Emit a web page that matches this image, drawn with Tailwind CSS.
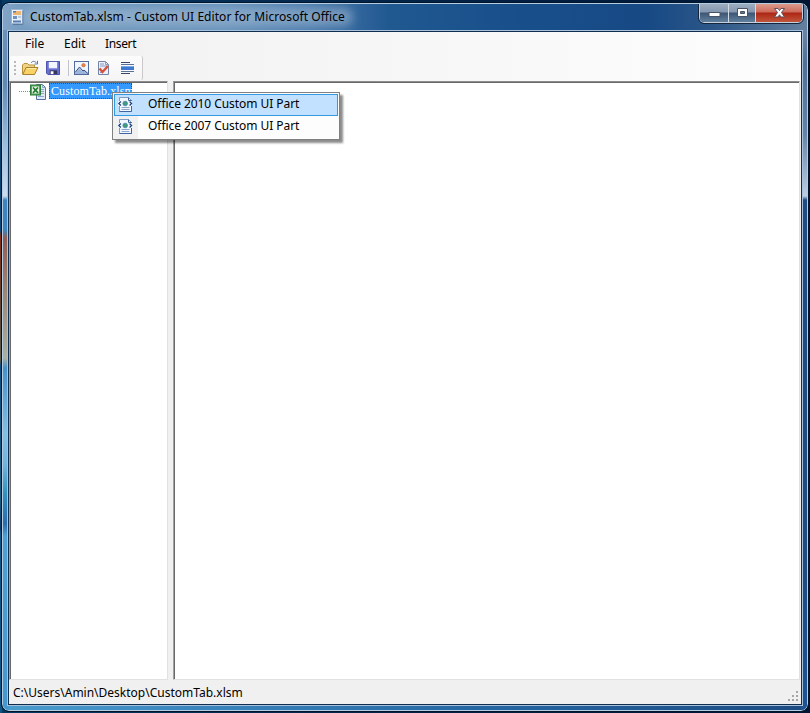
<!DOCTYPE html>
<html lang="en">
<head>
  <meta charset="UTF-8">
  <meta name="viewport" content="width=device-width, initial-scale=1.0">
  <title>CustomTab.xlsm - Custom UI Editor for Microsoft Office</title>
  <script src="https://cdn.jsdelivr.net/npm/@tailwindcss/browser@4"></script>
</head>
<body class="w-[810px] h-[713px] overflow-hidden bg-[linear-gradient(90deg,#063a64_0%,#032347_50%,#001533_100%)] pl-[2px] pt-[3px] font-['Noto_Sans',sans-serif] text-xs text-black whitespace-nowrap">
  <!-- Desktop showing at the left edge -->
  <div class="absolute left-0 top-0 w-[2px] h-[713px] bg-[linear-gradient(180deg,#062c50_0px,#0b4a78_230px,#7e2c18_236px,#5d4833_320px,#5d5a47_360px,#0b4f80_366px,#175d7e_500px,#073965_528px,#0c5585_533px,#0c5585_713px)]"></div>

  <!-- Window frame -->
  <div class="relative w-[806px] h-[708px] rounded-[7px] border border-[#b4cde3] outline outline-1 outline-[#02162b] bg-[linear-gradient(90deg,#4a9dcd_0%,#3d88c0_20%,#2566a2_60%,#1d4b82_100%)] px-[4px] flex flex-col overflow-hidden">
    <!-- Glass colours of the frame sides -->
    <div class="absolute left-0 top-0 w-[6px] h-[706px] bg-[linear-gradient(180deg,#7195bb_0px,#6189b3_80px,#9bbdde_140px,#cadcf0_192px,#3c85bd_196px,#3c85bd_226px,#935c54_234px,#9b8070_280px,#aab0a1_354px,#4592c8_364px,#83bfe3_430px,#71b4dc_460px,#3192bd_490px,#2b6dad_520px,#4da0d1_532px,#4498cd_706px)]"></div>
    <div class="absolute right-0 top-0 w-[6px] h-[706px] bg-[linear-gradient(180deg,#7f96b2_0px,#526f95_60px,#6684a8_130px,#bdcde2_192px,#1f4c82_196px,#1d4b82_560px,#1d5595_706px)]"></div>
    <div class="absolute left-0 top-0 w-full h-[26px] bg-[linear-gradient(90deg,#83a4c6_0%,#719abf_3%,#6692bb_28%,#4b7bad_38%,#205890_48%,#184f8b_65%,#174984_80%,#2b5688_88%,#64809f_100%)]"></div>

    <!-- Title bar -->
    <div class="relative flex h-[26px] shrink-0">
      <svg class="mt-[5px] ml-[4px] w-[13px] h-[16px]" viewBox="0 0 13 16">
        <rect x=".5" y=".5" width="11" height="14" fill="#edf3fb" stroke="#9db3cf"/>
        <rect x="2" y="2" width="8" height="4" fill="#f2b56b"/>
        <rect x="2" y="2" width="3" height="1.500" fill="#567eae"/>
        <rect x="2" y="7" width="4" height="3" fill="#6a91c7"/>
        <rect x="7" y="7" width="3" height="2" fill="#b8cbe2"/>
        <path d="M2 12.500H10" stroke="#4e78b4" stroke-width="2"/>
        <path d="M12 2V15.500H2" stroke="#5877a0" fill="none"/>
      </svg>
      <div class="relative ml-[6px] mt-[4px] h-[18px] leading-[18px]">
        <div class="absolute -left-2 -right-2 top-0 h-[18px] rounded-full bg-[#a7bdd3]/55 blur-[5px]"></div>
        <span class="relative tracking-[0.06px]">CustomTab.xlsm - Custom UI Editor for Microsoft Office</span>
      </div>
      <div class="absolute right-0 top-[-1px] flex h-[20px] w-[104px] rounded-b-[5px] border border-t-0 border-[#c3d1df] outline outline-1 outline-[#15253c] overflow-hidden">
        <div class="w-[29px] border-r border-[#d3dce6] bg-[linear-gradient(180deg,#a1b1c4_0%,#8497ae_48%,#3d5575_52%,#62809e_100%)] flex justify-center">
          <svg width="13" height="7" class="mt-[8px]" viewBox="0 0 13 7"><rect x="1" y="1.500" width="11" height="4" fill="#fff" stroke="#4a5365"/></svg>
        </div>
        <div class="w-[27px] border-r border-[#d3dce6] bg-[linear-gradient(180deg,#a1b1c4_0%,#8497ae_48%,#3d5575_52%,#62809e_100%)] flex justify-center">
          <svg width="13" height="11" class="mt-[4px]" viewBox="0 0 13 11"><path fill-rule="evenodd" d="M1.500 1.500H11.500V9.500H1.500ZM4.500 4.500V6.500H8.500V4.500Z" fill="#fff" stroke="#4a5365"/></svg>
        </div>
        <div class="flex-1 bg-[linear-gradient(180deg,#dda092_0%,#cd6a5a_48%,#ac2512_52%,#c1553b_100%)] flex justify-center">
          <svg width="13" height="12" class="mt-[4px]" viewBox="0 0 13 12"><path d="M1.500 1.500H5L6.500 3.500 8 1.500H11.500L8.500 5.500 11.500 10H8L6.500 7.800 5 10H1.500L4.500 5.500Z" fill="#fff" stroke="#5d4e59"/></svg>
        </div>
      </div>
    </div>

    <!-- Client area -->
    <div class="relative w-[796px] h-[676px] shrink-0 border border-[#a8c0da] bg-[#102e50] p-px">
      <div class="flex flex-col w-[792px] h-[672px] bg-[#f0f0f0]">
        <div class="flex h-[24px] bg-[linear-gradient(90deg,#f0f0f0,#fdfdfd)] pl-[16px] leading-[24px]">
          <span class="w-[39px]">File</span>
          <span class="w-[41px]">Edit</span>
          <span class="tracking-[-0.35px]">Insert</span>
        </div>
        <div class="flex h-[26px] bg-[linear-gradient(90deg,#f0f0f0,#fdfdfd)]">
          <div class="flex items-center w-[133px] h-[24px] ml-[1px] rounded-[2px] border-r border-[#c9c9c9] bg-[linear-gradient(180deg,#fcfcfc,#f5f5f5)]">
            <svg class="ml-[4px] w-[3px] h-[15px]" viewBox="0 0 3 15"><path d="M1 0V15" stroke="#b9b9b9" stroke-width="2" stroke-dasharray="2 2"/></svg>
            <!-- Open -->
            <svg class="ml-[5px] w-[17px] h-[16px] -mt-px" viewBox="0 0 17 16">
              <path d="M.5 14V5L2 3.500H5.500L7 5H12.500V7.500" fill="#f0d283" stroke="#b8933c"/>
              <path d="M.8 14.500 4 7.500H16L12.500 14.500Z" fill="#f8d264" stroke="#a98030"/>
              <path d="M5 8.600H14" stroke="#fff0b0"/>
              <path d="M9 3C10.500.7 13 .8 14.500 3M15.500 .8V4H12.500" fill="none" stroke="#5f789c"/>
            </svg>
            <!-- Save -->
            <svg class="ml-[7px] w-[14px] h-[14px]" viewBox="0 0 15 15">
              <path d="M.5.5H14.500V14.500H2L.5 13Z" fill="#6a70d2" stroke="#4247a4"/>
              <rect x="3" y="1" width="9" height="7" fill="#f4f6ff"/>
              <path d="M3 8H12" stroke="#8d94de"/>
              <rect x="4" y="10" width="8" height="4" fill="#34375d"/>
              <rect x="5" y="11" width="3" height="3" fill="#fff"/>
            </svg>
            <div class="ml-[8px] w-px h-[16px] bg-[#c3c3c8]"></div>
            <!-- Insert icon -->
            <svg class="ml-[5px] w-[15px] h-[14px]" viewBox="0 0 15 14">
              <rect x=".5" y=".5" width="14" height="13" fill="#eff6ff" stroke="#526b9b"/>
              <path d="M1 12 5.500 7 8 10 9.500 9 14 12.500V13H1Z" fill="#9db5da"/>
              <path d="M1 11.500 5.500 6 9 10 10 9 14 12.500" fill="none" stroke="#344c7c"/>
              <circle cx="9.500" cy="4.200" r="1.700" fill="#ef873d" stroke="#b96238" stroke-width=".6"/>
            </svg>
            <!-- Validate -->
            <svg class="ml-[9px] w-[12px] h-[14px]" viewBox="0 0 12 14">
              <path d="M.5.5H7.500L10.500 3.500V13.500H.5Z" fill="#eaf0fb" stroke="#7384a8"/>
              <path d="M7.500.5V3.500H10.500M2 3H6M2 5H9M2 11.500H4" fill="none" stroke="#8a9bbf"/>
              <path d="M1.500 7.500 4.500 11 10 5" fill="none" stroke="#d6513a" stroke-width="2.400"/>
            </svg>
            <!-- Generate callbacks -->
            <svg class="ml-[11px] w-[13px] h-[12px]" viewBox="0 0 13 12">
              <path d="M0 .5H9M0 11.500H9" stroke="#34486e"/>
              <path d="M0 2.500H13M0 9.500H13" stroke="#5c6f94"/>
              <rect y="4" width="13" height="4" fill="#3e79cf"/>
              <path d="M0 4.500H13" stroke="#79aae5"/>
            </svg>
          </div>
        </div>

        <!-- Part tree and editor -->
        <div class="flex h-[600px]">
          <div class="w-[160px] h-[600px]">
            <div class="w-[159px] h-[599px] -mt-px border border-t-[#8c8c8c] border-l-[#a0a0a0] border-r-[#e1e1e1] border-b-[#e1e1e1] bg-white shadow-[inset_1px_1px_0_#696969] flex pt-px">
              <div class="w-[11px] mt-[8px] ml-[9px] h-px border-t border-dotted border-[#8a8a8a]"></div>
              <svg class="w-[16px] h-[16px] mt-px" viewBox="0 0 16 16">
                <path d="M6.500 .5H12.500L15.500 3.500V15.500H6.500Z" fill="#dfe9f8" stroke="#57719b"/>
                <path d="M12.500.5V3.500H15.500M8 12.500H14M11 5.500H14M11 7.500H14M11 9.500H14" fill="none" stroke="#8ea5c8"/>
                <rect x=".5" y="1" width="10" height="10" fill="#4fa455" stroke="#2f7d3b"/>
                <rect x="2" y="2.500" width="7" height="7" fill="#e9f5e6"/>
                <path d="M3 3.500 8 8.800M8 3.500 3 8.800" stroke="#237a31" stroke-width="1.700"/>
              </svg>
              <div class="ml-[3px] h-[16px] w-[83px] border border-dotted border-[#6b4b16] bg-[#3399ff] pl-px text-white font-['Liberation_Serif',serif] text-[12px] leading-[14px] tracking-[0.1px]">CustomTab.xlsm</div>
            </div>
          </div>
          <div class="ml-[4px] w-[628px] h-[600px] pr-px">
            <div class="w-[627px] h-[599px] -mt-px border border-t-[#8c8c8c] border-l-[#a0a0a0] border-r-[#e1e1e1] border-b-[#e1e1e1] bg-white shadow-[inset_1px_1px_0_#696969]"></div>
          </div>
        </div>

        <!-- Status bar -->
        <div class="flex justify-between h-[22px] pl-[4px] leading-[22px]">
          <span id="status">C:\Users\Amin\Desktop\CustomTab.xlsm</span>
          <svg class="mt-[9px] mr-[2px] w-[11px] h-[11px]" viewBox="0 0 11 11" fill="#a6a6a6">
            <path d="M8 0H10V2H8ZM4 4H6V6H4ZM8 4H10V6H8ZM0 8H2V10H0ZM4 8H6V10H4ZM8 8H10V10H8Z"/>
          </svg>
        </div>
      </div>
    </div>
  </div>

  <!-- Context menu -->
  <div class="absolute left-[112px] top-[92px] w-[228px] h-[48px] border border-[#808080] bg-[linear-gradient(90deg,#f1f1f1_25px,#fdfdfd_25px)] p-px shadow-[3px_3px_2px_rgba(0,0,0,0.45)] tracking-[-0.06px]">
    <div class="flex w-[224px] h-[22px] border border-[#3399e0] bg-[#c2e0ff] leading-[18px]">
      <svg class="ml-[3px] mt-[2px] w-[15px] h-[16px]" viewBox="0 0 15 16">
        <path d="M1.500.5H10.500L13.500 3.500V14.500H1.500Z" fill="#f2f7ff" stroke="#7f9cc6"/>
        <path d="M10.500.5V3.500H13.500V14.500H1.500" fill="none" stroke="#3f66a0"/>
        <path d="M3.500 10.500H11.500M3.500 12.500H11.500" stroke="#8ba6cd"/>
        <rect y="4" width="14" height="5" fill="#f2f7ff"/>
        <circle cx="7.200" cy="6.500" r="2.300" fill="#3d9c79" stroke="#4a82b0" stroke-width=".8"/>
        <path d="M2.800 4.500 .8 6.500 2.800 8.500M11.600 4.500 13.600 6.500 11.600 8.500" fill="none" stroke="#153d74" stroke-width="1.200"/>
      </svg>
      <span class="ml-[15px]">Office 2010 Custom UI Part</span>
    </div>
    <div class="flex w-[224px] h-[22px] pl-px pt-px leading-[18px]">
      <svg class="ml-[3px] mt-[2px] w-[15px] h-[16px]" viewBox="0 0 15 16">
        <path d="M1.500.5H10.500L13.500 3.500V14.500H1.500Z" fill="#f2f7ff" stroke="#7f9cc6"/>
        <path d="M10.500.5V3.500H13.500V14.500H1.500" fill="none" stroke="#3f66a0"/>
        <path d="M3.500 10.500H11.500M3.500 12.500H11.500" stroke="#8ba6cd"/>
        <rect y="4" width="14" height="5" fill="#f2f7ff"/>
        <circle cx="7.200" cy="6.500" r="2.300" fill="#3d9c79" stroke="#4a82b0" stroke-width=".8"/>
        <path d="M2.800 4.500 .8 6.500 2.800 8.500M11.600 4.500 13.600 6.500 11.600 8.500" fill="none" stroke="#153d74" stroke-width="1.200"/>
      </svg>
      <span class="ml-[15px]">Office 2007 Custom UI Part</span>
    </div>
  </div>
</body>
</html>
